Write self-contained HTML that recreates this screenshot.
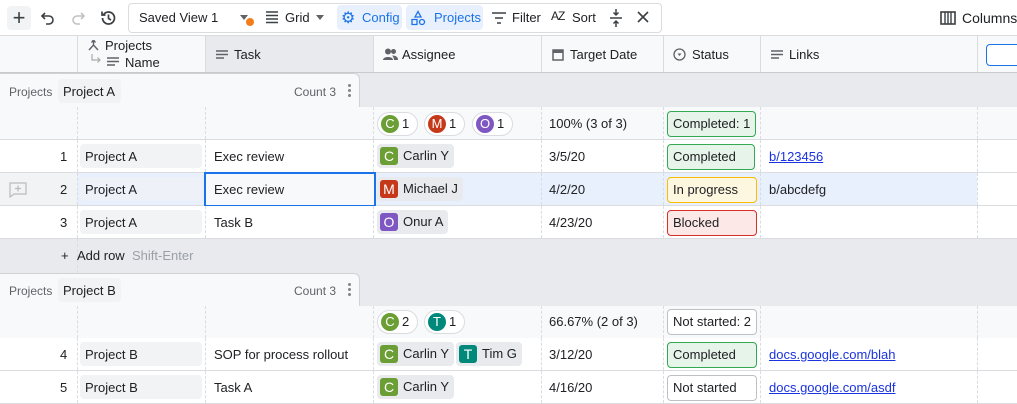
<!DOCTYPE html>
<html><head><style>
*{box-sizing:border-box;margin:0;padding:0}
body{width:1017px;height:403px;overflow:hidden;background:#fff;font-family:"Liberation Sans",Arial,sans-serif;font-size:13px;color:#202124;position:relative}
.a{position:absolute}
.tb{top:0;left:0;width:1017px;height:36px;background:#fff;border-bottom:1px solid #dadce0}
.hdr{top:36px;left:0;width:1017px;height:37px;background:#f8f9fa;border-bottom:1px solid #c8cacd}
.vl{position:absolute;top:0;bottom:0;width:1px;background:#dadce0}
.grp{left:0;width:1017px;height:34px;background:#e8eaed}
.tab{left:0;width:360px;height:35px;background:#f8f9fa;border:1px solid #d0d2d5;border-left:none;border-bottom:none;border-radius:0 6px 0 0}
.sum{left:0;width:1017px;height:33px;background:#f8f9fa;border-bottom:1px solid #dadce0}
.row{left:0;width:1017px;height:33px;background:#fff;border-bottom:1px solid #dadce0}
.dl{position:absolute;top:0;bottom:0;border-left:1px dashed #dadce0}
.t{position:absolute;white-space:nowrap}
.chip{position:absolute;background:#f1f3f4;border-radius:4px;height:24px}
.pc{position:absolute;height:24px;border-radius:4px;background:#e8eaed;padding:0 5px 0 26px;line-height:24px;white-space:nowrap}
.pc b{position:absolute;left:3px;top:3px;width:18px;height:18px;border-radius:3px;color:#fff;font-weight:normal;text-align:center;line-height:18px;font-size:14px}
.cc{position:absolute;height:24px;border:1px solid #dadce0;border-radius:12px;background:#fff;padding:0 8px 0 24px;line-height:22px}
.cc b{position:absolute;left:3px;top:2px;width:18px;height:18px;border-radius:9px;color:#fff;font-weight:normal;text-align:center;line-height:18px;font-size:13px}
.st{position:absolute;height:26px;border-radius:4px;border:1px solid;padding:0 5px;line-height:24px;white-space:nowrap}
.g{background:#e6f4ea;border-color:#34a853}.y{background:#fef7e0;border-color:#fbbc04}.r{background:#fce8e6;border-color:#d93025}.w{background:#fff;border-color:#bdc1c6}
.lnk{text-decoration:underline;color:#1a33e0}
.gc{background:#6b9e34}.rc{background:#c5391a}.pu{background:#7e57c2}.tc{background:#00897b}
.gray{color:#5f6368}
.keb{position:absolute;width:3px}
.keb i{display:block;width:3px;height:3px;border-radius:2px;background:#80868b;margin-bottom:2px}
</style></head><body>
<div class="a tb">
 <div class="a" style="left:7px;top:6px;width:24px;height:24px;background:#f1f3f4;border-radius:4px;text-align:center;line-height:23px;font-size:22px;color:#3c4043">+</div>
 <svg class="a" style="left:40px;top:10px" width="16" height="16" viewBox="0 0 16 16"><path d="M5 3L2 6l3 3M2 6h7a4 4 0 010 8H6" fill="none" stroke="#3c4043" stroke-width="1.6"/></svg>
 <svg class="a" style="left:70px;top:10px" width="16" height="16" viewBox="0 0 16 16"><path d="M11 3l3 3-3 3M14 6H7a4 4 0 000 8h3" fill="none" stroke="#c0c2c5" stroke-width="1.6"/></svg>
 <svg class="a" style="left:99px;top:9px" width="18" height="18" viewBox="0 0 18 18"><path d="M3.5 9a6 6 0 106-6 6 6 0 00-5 2.7M3 2.5v3.5h3.5M9.5 5.5v4l2.5 1.5" fill="none" stroke="#3c4043" stroke-width="1.7"/></svg>
 <div class="a" style="left:128px;top:3px;width:534px;height:30px;border:1px solid #dadce0;border-radius:4px"></div>
 <div class="t" style="left:139px;top:10px">Saved View 1</div>
 <div class="a" style="left:240px;top:15px;border:4px solid transparent;border-top:5px solid #5f6368"></div>
 <div class="a" style="left:246px;top:18px;width:8px;height:8px;border-radius:4px;background:#f27d1a"></div>
 <svg class="a" style="left:266px;top:11px" width="12" height="13"><path d="M0 1h12M0 4.5h12M0 8h12M0 11.5h12" stroke="#3c4043" stroke-width="1.4"/></svg>
 <div class="t" style="left:285px;top:10px">Grid</div>
 <div class="a" style="left:316px;top:15px;border:4px solid transparent;border-top:5px solid #5f6368"></div>
 <div class="a" style="left:337px;top:5px;width:65px;height:25px;background:#e8f0fe;border-radius:4px"></div>
 <div class="t" style="left:341px;top:8px;color:#1a73e8;font-size:16px">⚙</div>
 <div class="t" style="left:362px;top:10px;color:#1a73e8">Config</div>
 <div class="a" style="left:406px;top:5px;width:77px;height:25px;background:#e8f0fe;border-radius:4px"></div>
 <svg class="a" style="left:410px;top:10px" width="16" height="16" viewBox="0 0 16 16"><path d="M8 1.5L5 7h6zM2 9.5h5v5H2zM12 9.5a2.5 2.5 0 110 5 2.5 2.5 0 010-5z" fill="none" stroke="#1a73e8" stroke-width="1.3"/></svg>
 <div class="t" style="left:434px;top:10px;color:#1a73e8">Projects</div>
 <svg class="a" style="left:492px;top:12px" width="14" height="12"><path d="M0 1h14M3 6h8M5 11h4" stroke="#3c4043" stroke-width="1.6"/></svg>
 <div class="t" style="left:512px;top:10px">Filter</div>
 <div class="t" style="left:551px;top:9px;font-size:12px;letter-spacing:-1px">AZ</div>
 <div class="t" style="left:572px;top:10px">Sort</div>
 <svg class="a" style="left:609px;top:9px" width="14" height="18"><path d="M1 9h12M7 0v6M4.5 3.5L7 6l2.5-2.5M7 18v-6M4.5 14.5L7 12l2.5 2.5" fill="none" stroke="#3c4043" stroke-width="1.5"/></svg>
 <svg class="a" style="left:637px;top:11px" width="12" height="12"><path d="M1 1l10 10M11 1L1 11" stroke="#3c4043" stroke-width="1.6"/></svg>
 <svg class="a" style="left:940px;top:11px" width="16" height="14"><rect x="1" y="1" width="14" height="12" fill="none" stroke="#3c4043" stroke-width="1.6"/><path d="M5 1v12M8 1v12M11 1v12" stroke="#3c4043" stroke-width="1.4"/></svg>
 <div class="t" style="left:962px;top:10px;font-size:14px">Columns</div>
</div>
<div class="a hdr">
 <div class="vl" style="left:77px"></div><div class="vl" style="left:205px"></div><div class="vl" style="left:373px"></div><div class="vl" style="left:541px"></div><div class="vl" style="left:663px"></div><div class="vl" style="left:760px"></div><div class="vl" style="left:977px"></div>
 <div class="a" style="left:206px;top:0;width:167px;height:36px;background:#e8eaed"></div>
 <svg class="a" style="left:88px;top:4px" width="11" height="11"><path d="M5.5 0v5M1 10l4.5-5 4.5 5M3.5 2.5L5.5 0l2 2.5" fill="none" stroke="#5f6368" stroke-width="1.4"/></svg>
 <div class="t" style="left:105px;top:2px">Projects</div>
 <svg class="a" style="left:91px;top:18px" width="10" height="10"><path d="M1 0v6h8M6.5 3.5L9 6l-2.5 2.5" fill="none" stroke="#aaa" stroke-width="1.2"/></svg>
 <svg class="a" style="left:107px;top:21px" width="12" height="9"><path d="M0 1h12M0 4.5h12M0 8h8" stroke="#5f6368" stroke-width="1.4"/></svg>
 <div class="t" style="left:125px;top:19px">Name</div>
 <svg class="a" style="left:216px;top:14px" width="12" height="9"><path d="M0 1h12M0 4.5h12M0 8h8" stroke="#5f6368" stroke-width="1.4"/></svg>
 <div class="t" style="left:234px;top:11px">Task</div>
 <svg class="a" style="left:383px;top:12px" width="15" height="12"><circle cx="5" cy="3.5" r="3" fill="#5f6368"/><path d="M0 12c0-4 10-4 10 0z" fill="#5f6368"/><circle cx="10.5" cy="3.5" r="2.5" fill="#5f6368"/><path d="M9 7.5c4 0 6 1.5 6 4.5h-4c0-2-1-3.5-2-4.5z" fill="#5f6368"/></svg>
 <div class="t" style="left:402px;top:11px">Assignee</div>
 <svg class="a" style="left:552px;top:12px" width="12" height="13"><rect x="1" y="2" width="10" height="10" fill="none" stroke="#5f6368" stroke-width="1.5"/><rect x="1" y="2" width="10" height="3" fill="#5f6368"/></svg>
 <div class="t" style="left:570px;top:11px">Target Date</div>
 <svg class="a" style="left:673px;top:12px" width="13" height="13"><circle cx="6.5" cy="6.5" r="5.5" fill="none" stroke="#5f6368" stroke-width="1.3"/><path d="M4.5 5.5h4l-2 2.5z" fill="#5f6368"/></svg>
 <div class="t" style="left:692px;top:11px">Status</div>
 <svg class="a" style="left:771px;top:14px" width="12" height="9"><path d="M0 1h12M0 4.5h12M0 8h8" stroke="#5f6368" stroke-width="1.4"/></svg>
 <div class="t" style="left:789px;top:11px">Links</div>
 <div class="a" style="left:986px;top:8px;width:40px;height:22px;border:1.5px solid #1a73e8;border-radius:4px;background:#fff"></div>
</div>
<div class="a grp" style="top:73px"></div>
<div class="a tab" style="top:73px"></div>
<div class="t gray" style="left:9px;top:85px;font-size:12px">Projects</div>
<div class="chip" style="left:58px;top:79px;width:63px"></div><div class="t" style="left:63px;top:84px">Project A</div>
<div class="t gray" style="left:294px;top:85px;font-size:12px">Count 3</div>
<div class="keb" style="left:348px;top:84px"><i></i><i></i><i></i></div>
<div class="a sum" style="top:107px"><div class="dl" style="left:77px"></div><div class="dl" style="left:205px"></div><div class="dl" style="left:373px"></div><div class="dl" style="left:541px"></div><div class="dl" style="left:663px"></div><div class="dl" style="left:760px"></div><div class="dl" style="left:977px"></div>
 <div class="cc" style="left:377px;top:5px"><b class="gc">C</b>1</div><div class="cc" style="left:424px;top:5px"><b class="rc">M</b>1</div><div class="cc" style="left:472px;top:5px"><b class="pu">O</b>1</div>
 <div class="t" style="left:549px;top:9px">100% (3 of 3)</div>
 <div class="st g" style="left:667px;top:4px">Completed: 1</div>
</div>
<div class="a row" style="top:140px"><div class="dl" style="left:77px"></div><div class="dl" style="left:205px"></div><div class="dl" style="left:373px"></div><div class="dl" style="left:541px"></div><div class="dl" style="left:663px"></div><div class="dl" style="left:760px"></div><div class="dl" style="left:977px"></div>
 <div class="t" style="left:60px;top:9px">1</div><div class="chip" style="left:80px;top:4px;width:122px"></div><div class="t" style="left:85px;top:9px">Project A</div>
 <div class="t" style="left:214px;top:9px">Exec review</div>
 <div class="pc" style="left:377px;top:4px"><b class="gc">C</b>Carlin Y</div>
 <div class="t" style="left:549px;top:9px">3/5/20</div>
 <div class="st g" style="left:667px;top:4px;width:88px">Completed</div>
 <div class="t lnk" style="left:769px;top:9px">b/123456</div>
</div>
<div class="a row" style="top:173px"><div class="a" style="left:0;top:0;width:977px;height:32px;background:#e8f0fe"></div><div class="a" style="left:0;top:0;width:77px;height:32px;background:#f1f3f4"></div><div class="dl" style="left:77px"></div><div class="dl" style="left:373px"></div><div class="dl" style="left:541px"></div><div class="dl" style="left:663px"></div><div class="dl" style="left:760px"></div><div class="dl" style="left:977px"></div>
 <svg class="a" style="left:9px;top:9px" width="18" height="16"><path d="M1 1h16v11H5l-4 3z" fill="none" stroke="#bbb" stroke-width="1.2"/><path d="M9 3.5v6M6 6.5h6" stroke="#bbb" stroke-width="1.2"/></svg>
 <div class="t" style="left:60px;top:9px">2</div><div class="chip" style="left:80px;top:4px;width:122px;background:#eef2f8"></div><div class="t" style="left:85px;top:9px">Project A</div>
 <div class="a" style="left:204px;top:-1px;width:172px;height:35px;border:2px solid #1a73e8;background:#f8f9fa"></div>
 <div class="t" style="left:214px;top:9px">Exec review</div>
 <div class="pc" style="left:377px;top:4px"><b class="rc">M</b>Michael J</div>
 <div class="t" style="left:549px;top:9px">4/2/20</div>
 <div class="st y" style="left:667px;top:4px;width:90px">In progress</div>
 <div class="t" style="left:769px;top:9px">b/abcdefg</div>
</div>
<div class="a row" style="top:206px"><div class="dl" style="left:77px"></div><div class="dl" style="left:205px"></div><div class="dl" style="left:373px"></div><div class="dl" style="left:541px"></div><div class="dl" style="left:663px"></div><div class="dl" style="left:760px"></div><div class="dl" style="left:977px"></div>
 <div class="t" style="left:60px;top:9px">3</div><div class="chip" style="left:80px;top:4px;width:122px"></div><div class="t" style="left:85px;top:9px">Project A</div>
 <div class="t" style="left:214px;top:9px">Task B</div>
 <div class="pc" style="left:377px;top:4px"><b class="pu">O</b>Onur A</div>
 <div class="t" style="left:549px;top:9px">4/23/20</div>
 <div class="st r" style="left:667px;top:4px;width:90px">Blocked</div>
</div>
<div class="a" style="top:239px;left:0;width:1017px;height:34px;background:#e8eaed"><div class="dl" style="left:77px"></div>
 <div class="t" style="left:61px;top:9px">+</div><div class="t" style="left:77px;top:9px">Add row</div><div class="t" style="left:132px;top:9px;color:#9aa0a6">Shift-Enter</div>
</div>
<div class="a grp" style="top:273px"></div>
<div class="a tab" style="top:273px"></div>
<div class="t gray" style="left:9px;top:284px;font-size:12px">Projects</div>
<div class="chip" style="left:58px;top:278px;width:63px"></div><div class="t" style="left:63px;top:283px">Project B</div>
<div class="t gray" style="left:294px;top:284px;font-size:12px">Count 3</div>
<div class="keb" style="left:348px;top:283px"><i></i><i></i><i></i></div>
<div class="a sum" style="top:306px"><div class="dl" style="left:77px"></div><div class="dl" style="left:205px"></div><div class="dl" style="left:373px"></div><div class="dl" style="left:541px"></div><div class="dl" style="left:663px"></div><div class="dl" style="left:760px"></div><div class="dl" style="left:977px"></div>
 <div class="cc" style="left:377px;top:4px"><b class="gc">C</b>2</div><div class="cc" style="left:424px;top:4px"><b class="tc">T</b>1</div>
 <div class="t" style="left:549px;top:8px">66.67% (2 of 3)</div>
 <div class="st w" style="left:667px;top:3px">Not started: 2</div>
</div>
<div class="a row" style="top:338px"><div class="dl" style="left:77px"></div><div class="dl" style="left:205px"></div><div class="dl" style="left:373px"></div><div class="dl" style="left:541px"></div><div class="dl" style="left:663px"></div><div class="dl" style="left:760px"></div><div class="dl" style="left:977px"></div>
 <div class="t" style="left:60px;top:9px">4</div><div class="chip" style="left:80px;top:4px;width:122px"></div><div class="t" style="left:85px;top:9px">Project B</div>
 <div class="t" style="left:214px;top:9px">SOP for process rollout</div>
 <div class="pc" style="left:377px;top:4px"><b class="gc">C</b>Carlin Y</div><div class="pc" style="left:456px;top:4px"><b class="tc">T</b>Tim G</div>
 <div class="t" style="left:549px;top:9px">3/12/20</div>
 <div class="st g" style="left:667px;top:4px;width:90px">Completed</div>
 <div class="t lnk" style="left:769px;top:9px">docs.google.com/blah</div>
</div>
<div class="a row" style="top:371px"><div class="dl" style="left:77px"></div><div class="dl" style="left:205px"></div><div class="dl" style="left:373px"></div><div class="dl" style="left:541px"></div><div class="dl" style="left:663px"></div><div class="dl" style="left:760px"></div><div class="dl" style="left:977px"></div>
 <div class="t" style="left:60px;top:9px">5</div><div class="chip" style="left:80px;top:4px;width:122px"></div><div class="t" style="left:85px;top:9px">Project B</div>
 <div class="t" style="left:214px;top:9px">Task A</div>
 <div class="pc" style="left:377px;top:4px"><b class="gc">C</b>Carlin Y</div>
 <div class="t" style="left:549px;top:9px">4/16/20</div>
 <div class="st w" style="left:667px;top:4px;width:90px">Not started</div>
 <div class="t lnk" style="left:769px;top:9px">docs.google.com/asdf</div>
</div>
</body></html>
